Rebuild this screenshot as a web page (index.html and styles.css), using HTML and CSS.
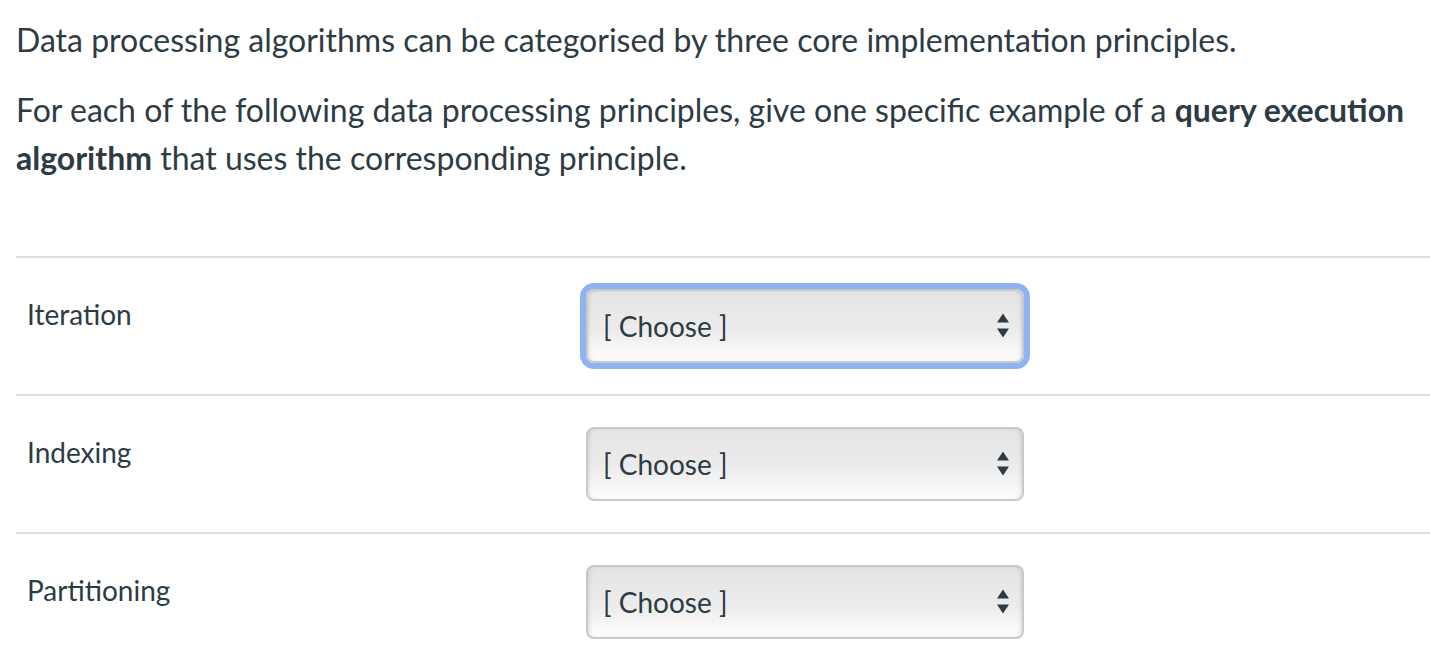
FILE: index.html
```html
<!DOCTYPE html>
<html lang="en">
<head>
<meta charset="utf-8">
<title>Question</title>
<link rel="stylesheet" href="styles.css">
</head>
<body>
<div class="question">
  <p class="text">Data processing algorithms can be categorised by three core implementation principles.</p>
  <p class="text">For each of the following data processing principles, give one specific example of a <strong>query execution algorithm</strong> that uses the corresponding principle.</p>
  <div class="answers">
    <div class="row">
      <div class="label">Iteration</div>
      <div class="select focused">
        <span class="value">[ Choose ]</span>
        <svg class="arrows" width="14" height="26" viewBox="0 0 14 26"><path d="M7 0.5 L13 9.5 L1 9.5 Z M1 15.5 L13 15.5 L7 24.5 Z" fill="#2d3b45"/></svg>
      </div>
    </div>
    <div class="row">
      <div class="label">Indexing</div>
      <div class="select">
        <span class="value">[ Choose ]</span>
        <svg class="arrows" width="14" height="26" viewBox="0 0 14 26"><path d="M7 0.5 L13 9.5 L1 9.5 Z M1 15.5 L13 15.5 L7 24.5 Z" fill="#2d3b45"/></svg>
      </div>
    </div>
    <div class="row">
      <div class="label">Partitioning</div>
      <div class="select">
        <span class="value">[ Choose ]</span>
        <svg class="arrows" width="14" height="26" viewBox="0 0 14 26"><path d="M7 0.5 L13 9.5 L1 9.5 Z M1 15.5 L13 15.5 L7 24.5 Z" fill="#2d3b45"/></svg>
      </div>
    </div>
  </div>
</div>
</body>
</html>
```

FILE: styles.css
```css
html, body {
  margin: 0;
  padding: 0;
  background: #ffffff;
}

body {
  font-family: Lato, "Open Sans", "Liberation Sans", sans-serif;
  color: #2d3b45;
  font-size: 32px;
  line-height: 48px;
}

.question {
  padding: 16px 0 0 16px;
}

.text {
  margin: 0 0 22px 0;
}

.text strong {
  font-weight: 700;
}

.answers {
  margin-top: 74px;
}

.row {
  display: flex;
  align-items: flex-start;
  border-top: 2px solid #dddddd;
  padding: 31px 0;
}

.label {
  width: 559px;
  padding: 1px 0 0 11px;
  font-size: 28px;
  line-height: 48px;
}

.select {
  box-sizing: border-box;
  width: 438px;
  height: 74px;
  border: 2px solid #c9c9c9;
  border-radius: 8px;
  display: flex;
  align-items: center;
  justify-content: space-between;
  padding: 0 12px 0 15px;
  font-size: 28px;
  background: linear-gradient(to bottom, #e4e4e4 0%, #ececec 55%, #fdfdfd 100%);
  box-shadow: inset 3px 0 4px -2px rgba(0,0,0,0.12), inset -3px 0 4px -2px rgba(0,0,0,0.12), inset 0 -1px 0 #ffffff;
}

.select.focused {
  box-shadow: 0 0 0 6px #8fb3f2, inset 3px 0 4px -2px rgba(0,0,0,0.12), inset -3px 0 4px -2px rgba(0,0,0,0.12), inset 0 -1px 0 #ffffff;
}

.value {
  line-height: 48px;
}

.arrows {
  display: block;
}
```
